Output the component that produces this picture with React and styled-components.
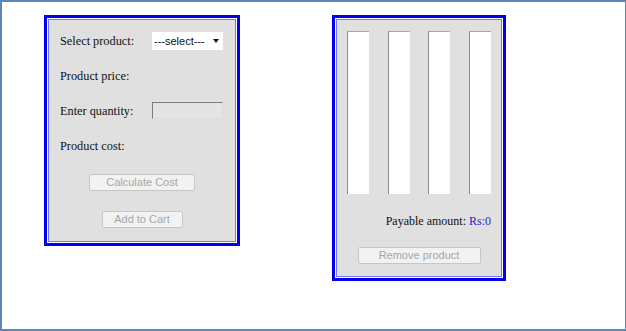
import React from "react";
import styled, { createGlobalStyle } from "styled-components";

const GlobalStyle = createGlobalStyle`
  html, body {
    margin: 0;
    padding: 0;
    background: #ffffff;
  }
`;

const Frame = styled.div`
  box-sizing: border-box;
  width: 626px;
  height: 331px;
  border: 2px solid #5e86b8;
  border-right-width: 1px;
  background: #ffffff;
  display: flex;
  align-items: flex-start;
  gap: 92px;
  padding: 13px 0 0 42px;
  font-family: "Liberation Serif", "Times New Roman", serif;
`;

const Panel = styled.div`
  box-sizing: border-box;
  width: ${(p) => p.width}px;
  border: 3px solid #0000ee;
  padding: 1px;
  background: #ffffff;
`;

const Inner = styled.div`
  border: 1px solid #7474f4;
  background: #e0e0e0;
  display: flex;
  flex-direction: column;
`;

const Form = styled.div`
  display: grid;
  grid-template-columns: 92px 71px;
  grid-auto-rows: 35px;
  align-items: center;
  padding: 3px 0 0 11px;
`;

const Label = styled.div`
  font-size: 12.3px;
  color: #111111;
  line-height: 14px;
`;

const SelectBox = styled.div`
  height: 18px;
  background: #ffffff;
  display: flex;
  align-items: center;
  padding: 0 4px 0 2px;
  box-sizing: border-box;
`;

const Select = styled.select`
  appearance: none;
  border: none;
  background: transparent;
  flex: 1;
  padding: 0;
  font-family: "Liberation Sans", Arial, sans-serif;
  font-size: 11px;
  color: #111111;
  outline: none;
`;

const QtyInput = styled.input`
  box-sizing: border-box;
  width: 71px;
  height: 17px;
  background: #e4e4e4;
  border: 1px solid;
  border-color: #7c7c7c #dcdcdc #dcdcdc #7c7c7c;
  padding: 0;
  margin: 0;
`;

const Actions = styled.div`
  display: flex;
  flex-direction: column;
  align-items: center;
  padding-bottom: ${(p) => p.pb}px;
`;

const Button = styled.button`
  box-sizing: border-box;
  width: ${(p) => p.w}px;
  height: 17px;
  margin-top: ${(p) => p.mt}px;
  padding: 0;
  border: 1px solid #c6c6c6;
  border-radius: 2px;
  background: #f2f2f2;
  color: #a6a6a6;
  font-family: "Liberation Sans", Arial, sans-serif;
  font-size: 11px;
  line-height: 15px;
`;

const Columns = styled.div`
  display: flex;
  justify-content: space-between;
  padding: 11px 10px 0 10px;
`;

const Column = styled.div`
  box-sizing: border-box;
  width: 22px;
  height: 163px;
  background: #ffffff;
  border-left: 1px solid #8c8c8c;
  border-top: 1px solid #a8a8a8;
`;

const Payable = styled.div`
  margin-top: 20px;
  padding-right: 10px;
  text-align: right;
  font-size: 12px;
  line-height: 14px;
  color: #111111;
`;

const Amount = styled.span`
  color: #2424c8;
`;

const Arrow = () => (
  <svg width="6" height="4" viewBox="0 0 6 4">
    <path d="M0 0 L6 0 L3 4 Z" fill="#111" />
  </svg>
);

export default function App() {
  return (
    <>
      <GlobalStyle />
      <Frame>
        <Panel width={196}>
          <Inner>
            <Form>
              <Label>Select product:</Label>
              <SelectBox>
                <Select defaultValue="">
                  <option value="">---select---</option>
                </Select>
                <Arrow />
              </SelectBox>
              <Label>Product price:</Label>
              <div />
              <Label>Enter quantity:</Label>
              <QtyInput disabled />
              <Label>Product cost:</Label>
              <div />
            </Form>
            <Actions pb={13}>
              <Button w={106} mt={11} disabled>
                Calculate Cost
              </Button>
              <Button w={81} mt={20} disabled>
                Add to Cart
              </Button>
            </Actions>
          </Inner>
        </Panel>

        <Panel width={174}>
          <Inner>
            <Columns>
              <Column />
              <Column />
              <Column />
              <Column />
            </Columns>
            <Payable>
              Payable amount: <Amount>Rs:0</Amount>
            </Payable>
            <Actions pb={12}>
              <Button w={123} mt={19} disabled>
                Remove product
              </Button>
            </Actions>
          </Inner>
        </Panel>
      </Frame>
    </>
  );
}
